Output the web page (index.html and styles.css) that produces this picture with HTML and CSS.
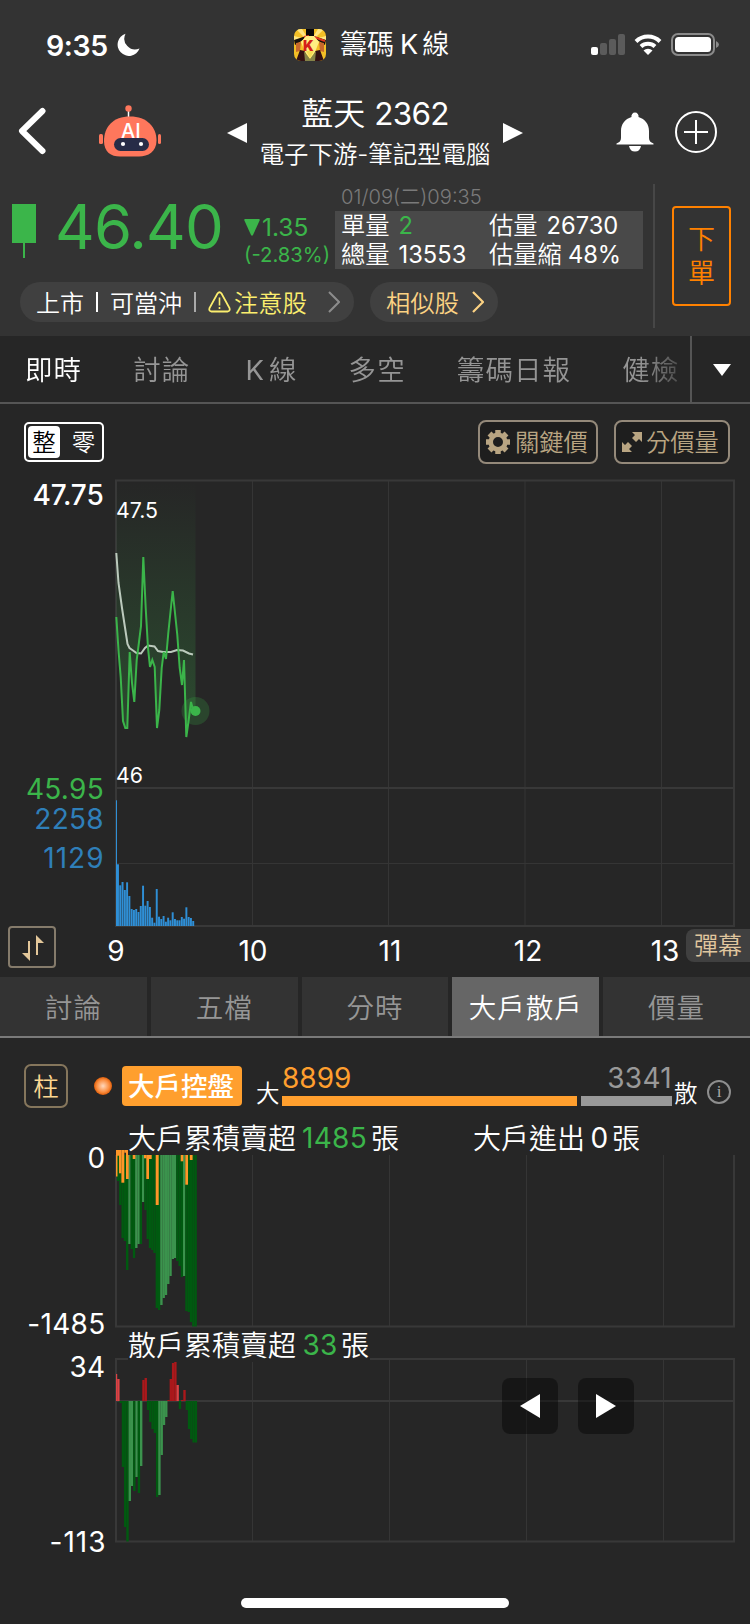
FILE: index.html
```html
<!DOCTYPE html>
<html lang="zh-Hant">
<head>
    <meta charset="UTF-8">
    <meta name="viewport" content="width=device-width, initial-scale=1.0">
    <title>籌碼K線</title>
    <link rel="stylesheet" href="styles.css">
</head>
<body>

    <!-- Status bar -->
    <div class="status">
        <div class="clock">
            <span>9:35</span>
            <svg width="24" height="24" viewBox="0 0 24 24"><path d="M9.500 .8A11.300 11.300 0 1 0 23.500 15.500 10.800 10.800 0 0 1 9.500 .8z" fill="#fff"/></svg>
        </div>
        <div class="app-name">
            <svg width="32" height="32" viewBox="0 0 32 32">
                <defs><clipPath id="round"><rect width="32" height="32" rx="7"/></clipPath></defs>
                <g clip-path="url(#round)">
                    <rect width="32" height="32" fill="#f3bf26"/>
                    <path d="M0 7L12 10 2 0h6l5 8V0h6v8l5-8h6L20 10l12-3v5H0z" fill="#ffe680"/>
                    <path d="M12 0h8v7h-8z" fill="#090909"/>
                    <path d="M0 11l9-3 4-1-4 4-8 5zM32 11l-9-3-4-1 4 4 8 5z" fill="#17120d"/>
                    <path d="M10 8l5-1M20 8l11 4" stroke="#e4361d" stroke-width="2"/>
                    <path d="M2 14l5-1-1 9-4 1zM25 13l5 1v9l-4-1z" fill="#c9682c"/>
                    <path d="M2 32l4-11 5 1 3 10zM30 32l-4-11-5 1-3 10z" fill="#331113"/>
                    <path d="M12 7h8l5 6-4 10-5 7-5-7-4-10z" fill="#ffef82"/>
                    <path d="M10 22l6 8 6-8-1 10h-10z" fill="#858348"/>
                    <path d="M12 22h8l-4 7z" fill="#f6dc55"/>
                    <text class="app-k" x="9" y="21.500">K</text>
                </g>
            </svg>
            <span>籌碼<b>K</b>線</span>
        </div>
        <div class="signals">
            <svg width="34" height="22" viewBox="0 0 34 22">
                <rect y="13" width="7" height="8" rx="2" fill="#fff"/>
                <rect x="9" y="9" width="7" height="12" rx="2" fill="#5b5b5b"/>
                <rect x="18" y="5" width="7" height="16" rx="2" fill="#5b5b5b"/>
                <rect x="27" width="7" height="21" rx="2" fill="#5b5b5b"/>
            </svg>
            <svg width="28" height="22" viewBox="0 0 28 22">
                <path d="M2 7.500a17 17 0 0 1 24 0M7 12.500a10.200 10.200 0 0 1 14 0" fill="none" stroke="#fff" stroke-width="4"/>
                <path d="M14 21l-4.500-4.500a6.500 6.500 0 0 1 9 0z" fill="#fff"/>
            </svg>
            <svg width="49" height="24" viewBox="0 0 49 24">
                <rect x="1" y="1" width="42" height="21" rx="6" fill="none" stroke="#8a8a8a" stroke-width="2"/>
                <rect x="4" y="4" width="36" height="15" rx="3.500" fill="#fff"/>
                <path d="M45 8q3 1.500 3 3.500t-3 3.500z" fill="#8a8a8a"/>
            </svg>
        </div>
    </div>

    <!-- Title bar -->
    <div class="header">
        <svg class="back" width="30" height="50" viewBox="0 0 30 50"><path d="M24.500 5L4 25l20.500 20" fill="none" stroke="#fff" stroke-width="6" stroke-linecap="round" stroke-linejoin="round"/></svg>
        <svg class="robot" width="62" height="52" viewBox="0 0 62 52">
            <path d="M29.500 5v8" stroke="#fff" stroke-width="1.500"/>
            <circle cx="29.500" cy="3.500" r="3.200" fill="#ff775c"/>
            <path d="M31 11.500C48 11.500 57.500 22 57.500 35.500 57.500 47 49 51.500 40 51.500H21C12 51.500 5 47 5 36 5 22 14 11.500 31 11.500z" fill="#ff775c"/>
            <rect y="29" width="4" height="10" rx="1.500" fill="#ff775c"/>
            <rect x="59" y="29" width="3" height="10" rx="1.500" fill="#ff775c"/>
            <rect x="15" y="33" width="35" height="13" rx="6.500" fill="#272c47"/>
            <circle cx="24" cy="39" r="2.100" fill="#fff"/>
            <circle cx="42" cy="39" r="2.100" fill="#fff"/>
            <text class="robot-ai" x="22" y="33">AI</text>
        </svg>
        <div class="stock">
            <svg width="20" height="20" viewBox="0 0 20 20"><path d="M0 10L20 0v20z" fill="#fff"/></svg>
            <div class="stock-name">
                <h1>藍天<span>2362</span></h1>
                <p>電子下游-筆記型電腦</p>
            </div>
            <svg width="20" height="20" viewBox="0 0 20 20"><path d="M20 10L0 0v20z" fill="#fff"/></svg>
        </div>
        <svg class="bell" width="38" height="41" viewBox="0 0 38 41">
            <path d="M15.500 6a3.600 3.600 0 1 1 7 0C29 8 33 13 33 20v7q0 4 4.500 5.500v1H.5v-1Q5 31 5 27v-7c0-7 4-12 10.500-14zM13 35h12q-1 5.500-6 5.500t-6-5.500z" fill="#fff"/>
        </svg>
        <svg width="42" height="42" viewBox="0 0 42 42"><circle cx="21" cy="21" r="20" fill="none" stroke="#fff" stroke-width="2"/><path d="M9 21h24M21 9v24" stroke="#fff" stroke-width="2"/></svg>
    </div>

    <!-- Quote -->
    <div class="quote">
        <div class="quote-main">
            <div class="price-row">
                <svg width="24" height="54" viewBox="0 0 24 54"><path d="M0 0h24v39H13v15h-2V39H0z" fill="#3bb54a"/></svg>
                <div class="price">46.40</div>
                <div class="change">
                    <div class="diff"><svg width="16" height="17" viewBox="0 0 16 17"><path d="M1 0h14q1 0 .6 1.500L9 16q-1 1.500-2 0L.4 1.500Q0 0 1 0z" fill="#3bb54a"/></svg>1.35</div>
                    <div class="percent">(-2.83%)</div>
                </div>
                <div class="volume">
                    <div class="date">01/09(二)09:35</div>
                    <div class="volume-box">
                        <div>單量<i class="green">2</i></div><div>估量<i>26730</i></div>
                        <div>總量<i>13553</i></div><div>估量縮<i class="near">48%</i></div>
                    </div>
                </div>
            </div>
            <div class="pills">
                <div class="pill pill-info">
                    <span>上市</span><s class="bar"></s><span>可當沖</span><s class="bar dim"></s>
                    <svg width="23" height="22" viewBox="0 0 23 22"><path d="M9.500 2.500q2-2.500 4 0l8 14.500q1 3-2 3.500h-16q-3-.5-2-3.500z" fill="none" stroke="#fbee6e" stroke-width="1.800"/><path d="M11.500 6.500v8M11.500 16v2" stroke="#fbee6e" stroke-width="1.600"/></svg>
                    <span class="warn">注意股</span>
                    <svg class="arrow" width="12" height="22" viewBox="0 0 12 22"><path d="M1 1l10 10L1 21" fill="none" stroke="#8c8c8c" stroke-width="2"/></svg>
                </div>
                <div class="pill pill-similar">
                    <span>相似股</span>
                    <svg width="12" height="22" viewBox="0 0 12 22"><path d="M1 1l10 10L1 21" fill="none" stroke="#fcd283" stroke-width="2.200"/></svg>
                </div>
            </div>
        </div>
        <div class="order"><button>下<br>單</button></div>
    </div>

    <!-- Page tabs -->
    <div class="tabs">
        <div class="tab-list">
            <a class="active">即時</a><a>討論</a><a><b>K</b>線</a><a>多空</a><a>籌碼日報</a><a>健檢</a>
        </div>
        <div class="more"><svg width="18" height="12" viewBox="0 0 18 12"><path d="M0 0h18L9 12z" fill="#fff"/></svg></div>
    </div>

    <div class="toolbar">
        <div class="switch"><span class="on">整</span><span>零</span></div>
        <button class="tool key-price">
            <svg width="24" height="24" viewBox="0 0 24 24">
                <circle cx="12" cy="12" r="7.300" fill="none" stroke="#b9a582" stroke-width="4.600"/>
                <path d="M12 0v4M12 20v4M0 12h4M20 12h4M3.500 3.500l2.800 2.800M17.700 17.700l2.800 2.800M3.500 20.500l2.800-2.800M17.700 6.300l2.800-2.800" stroke="#b9a582" stroke-width="5.500"/>
            </svg>
            <span>關鍵價</span>
        </button>
        <button class="tool">
            <svg width="20" height="20" viewBox="0 0 20 20"><path d="M10 0h10v10l-3-3-3 3-4-4 3-3zM0 10l3 3 3-3 4 4-3 3 3 3H0z" fill="#b9a582"/></svg>
            <span>分價量</span>
        </button>
    </div>

    <!-- Price and volume chart -->
    <div class="chart-box">
        <svg class="chart" width="750" height="501" viewBox="0 476 750 501">
            <defs>
                <linearGradient id="fade" gradientUnits="userSpaceOnUse" x1="0" y1="481" x2="0" y2="740">
                    <stop offset="0" stop-color="#3bb54a" stop-opacity="0"/>
                    <stop offset="1" stop-color="#3bb54a" stop-opacity=".27"/>
                </linearGradient>
            </defs>
            <path class="grid" d="M252.500 481v445M388.500 481v445M525 481v445M661.500 481v445M116 863.500h618"/>
            <path class="frame" d="M116 926V480.500h618V926zM116 788h618"/>
            <path fill="url(#fade)" d="M116.300 481V617L118.700 653 120.700 677 123 721 125.300 728 127.300 728 129.700 652 132 683 134.300 702 136.700 660 139 642 141 626 143.300 557 145.700 608 148 648 150 667 152.300 660 154.700 667 157 728 159.300 710 161.700 668 163.700 652 166 659 168.300 633 170.700 610 172.700 591 175 613 177.300 635 179.700 668 182 685 184 660 186.300 737 188.700 720 191 702 193.300 711 195.500 711V481z"/>
            <polyline class="average" points="116.300,553 118.500,583 122,608 127.500,644 129.500,648 133,650.500 136.500,653 141,653.500 145,648 148,645.500 154.500,646.500 158,651 163,652 171,652 177,650 183,650.500 189,653.500 193,654.500"/>
            <polyline class="line" points="116.300,617 118.700,653 120.700,677 123,721 125.300,728 127.300,728 129.700,652 132,683 134.300,702 136.700,660 139,642 141,626 143.300,557 145.700,608 148,648 150,667 152.300,660 154.700,667 157,728 159.300,710 161.700,668 163.700,652 166,659 168.300,633 170.700,610 172.700,591 175,613 177.300,635 179.700,668 182,685 184,660 186.300,737 188.700,720 191,702 193.300,711 195.500,711"/>
            <circle cx="195.500" cy="711" r="14" fill="#3bb54a" fill-opacity=".22"/>
            <circle cx="195.500" cy="711" r="5" fill="#3bb54a"/>
            <g id="volumeBars"></g>
            <text class="label strong" x="103.500" y="504.500">47.75</text>
            <text class="label green" x="104" y="798.500">45.95</text>
            <text class="label blue" x="104" y="828.500">2258</text>
            <text class="label blue wide" x="104.500" y="867.500">1129</text>
            <text class="mark" x="116" y="518">47.5</text>
            <text class="mark" x="116" y="783">46</text>
            <text class="hour" x="116" y="961">9</text>
            <text class="hour" x="253" y="961">10</text>
            <text class="hour" x="390" y="961">11</text>
            <text class="hour" x="528" y="961">12</text>
            <text class="hour" x="665" y="961">13</text>
        </svg>
        <div class="sort"><svg width="22" height="26" viewBox="0 0 22 26"><path d="M6 6h2v20L0 18h6zM14 20V0l8 8h-6v12z" fill="#e3c79a"/></svg></div>
        <div class="danmu">彈幕</div>
    </div>

    <div class="sub-tabs">
        <a>討論</a><a>五檔</a><a>分時</a><a class="active">大戶散戶</a><a>價量</a>
    </div>

    <!-- Big / small holders -->
    <div class="holders">
        <div class="bar-mode">柱</div>
        <div class="dot"></div>
        <div class="badge">大戶控盤</div>
        <span class="side">大</span>
        <div class="ratio">
            <div class="ratio-numbers"><span>8899</span><span>3341</span></div>
            <div class="ratio-bar"><div style="width: 295px"></div><div style="width: 91px"></div></div>
        </div>
        <span class="side">散</span>
        <svg class="info" width="24" height="24" viewBox="0 0 24 24"><circle cx="12" cy="12" r="11" fill="none" stroke="#8e8e8e" stroke-width="2"/><text class="info-i" x="12" y="17">i</text></svg>
    </div>

    <div class="chart-box">
        <svg class="chart" width="750" height="450" viewBox="0 1116 750 450">
            <path class="grid" d="M252.500 1155v171M389.500 1155v171M526.500 1155v171M663.500 1155v171"/>
            <path class="frame" d="M116 1155v171.500h618V1155"/>
            <g id="bigBars"></g>
            <path class="grid" d="M252.500 1362v179M389.500 1360v181M526.500 1360v181M663.500 1360v181"/>
            <path class="frame" d="M128 1359h-12v182.500h618V1359H370M116 1401h618"/>
            <g id="smallBars"></g>
            <text class="label" x="105.500" y="1168">0</text>
            <text class="label" x="105.500" y="1333.500">-1485</text>
            <text class="label" x="105.500" y="1377">34</text>
            <text class="label wide" x="106.500" y="1552">-113</text>
            <text class="caption" x="128" y="1149">大戶累積賣超</text>
            <text class="caption number green" x="302" y="1148">1485</text>
            <text class="caption" x="371" y="1149">張</text>
            <text class="caption" x="473" y="1149">大戶進出</text>
            <text class="caption number" x="590.500" y="1148">0</text>
            <text class="caption" x="612" y="1149">張</text>
            <text class="caption" x="128" y="1356">散戶累積賣超</text>
            <text class="caption number green" x="302.500" y="1355">33</text>
            <text class="caption" x="341" y="1356">張</text>
        </svg>
        <div class="stepper">
            <button><svg width="20" height="24" viewBox="0 0 20 24"><path d="M0 12L20 0v24z" fill="#fff"/></svg></button>
            <button><svg width="20" height="24" viewBox="0 0 20 24"><path d="M20 12L0 0v24z" fill="#fff"/></svg></button>
        </div>
    </div>

    <div class="home-bar"></div>

    <script>
        const STEP = 2.28;
        const DARK = "#005a10", LIGHT = "#3b934d", RED = "#aa181b", PINK = "#dd4245", ORANGE = "#ff9628";

        function addBar(group, x, y1, y2, width, color) {
            let bar = document.createElementNS("http://www.w3.org/2000/svg", "rect");
            bar.setAttribute("x", x);
            bar.setAttribute("y", Math.min(y1, y2));
            bar.setAttribute("width", width);
            bar.setAttribute("height", Math.abs(y2 - y1));
            bar.setAttribute("fill", color);
            document.getElementById(group).appendChild(bar);
        }

        // volume per minute
        let volume = [61.7, 40.7, 44, 36, 43.7, 30, 17, 16, 17, 14, 20, 40.3, 20.3, 25, 19, 8.3, 3.3, 37, 9.3, 7, 10, 4.3, 8.3, 5.7, 13.7, 7, 5.7, 5.7, 9, 7.3, 18.7, 9, 8, 5];
        addBar("volumeBars", 116, 926, 800.3, 1, "#2f8fd6");
        volume.forEach((v, i) => addBar("volumeBars", 117 + i * STEP, 926, 926 - v, 1.95, "#2f8fd6"));

        // accumulated position of the big holders, l = lighter (recovering) minute
        let big = "26 50 83 86 115 89l 94 103 93l 89l 89 47l 55 84 93 95 98 153 155 150l 143l 140l 129l 121l 104l 103l 106 111 122 121l 156 157 167 171.500 171.500".split(" ");
        big.forEach((v, i) => addBar("bigBars", 116.9 + i * STEP, 1155, 1155 + parseFloat(v), STEP + .1, v.endsWith("l") ? LIGHT : DARK));
        let single = [[116, 1150, 1176.5, 1.5], [117, 1150, 1155.7, 2], [119, 1150, 1173.3, 2.4], [121.4, 1150, 1182.7, 2.9], [124.3, 1150, 1152.7, 1.7], [126, 1150, 1179, 2],
            [128, 1155, 1179, .7], [132.7, 1155, 1159, 2.7], [144, 1155, 1158.3, 2.5], [146.3, 1155, 1179, 2.7], [149, 1155, 1159, 2.7], [155.7, 1155, 1205, 3],
            [180.7, 1155, 1161.3, 2.6], [185.3, 1155, 1184.7, 2.7], [189.8, 1155, 1160, 2.8]];
        single.forEach(s => addBar("bigBars", s[0], s[1], s[2], s[3], ORANGE));

        // small holders, positive = bought
        let small = "22p -2 -66 -126 -140.500 -100l -85l -90 -76l -92 -65l 21 23 -9 -21 -28 -32 -96 -94l -54l -24l -16l 1 22 38 39 16p -8 1 11 -9 -28 -38 -41.500 -41.500".split(" ");
        addBar("smallBars", 116, 1401, 1374, 1.2, PINK);
        small.forEach((v, i) => {
            let n = parseFloat(v);
            let color = n > 0 ? (v.endsWith("p") ? PINK : RED) : (v.endsWith("l") ? LIGHT : DARK);
            addBar("smallBars", 117.2 + i * STEP, 1401, 1401 - n, STEP + .1, color);
        });
    </script>

</body>
</html>
```
FILE: styles.css
```css
* { box-sizing: border-box; }
body {
    width: 750px;
    height: 1624px;
    margin: 0;
    overflow: hidden;
    font-family: Inter, "Noto Sans CJK TC", sans-serif;
    font-weight: 350;
    color: #fff;
    background: #262626;
}
svg { display: block; flex: none; }
b { font-weight: 400; }
i { font-style: normal; }
h1, p { margin: 0; font-weight: 350; }
button {
    padding: 0;
    font: inherit;
    color: inherit;
    background: none;
    border: 0;
}
.green { color: #3bb54a; fill: #3bb54a; }

/* status bar */
.status {
    display: flex;
    align-items: center;
    height: 90px;
    padding: 0 30px 0 46px;
    background: #333;
}
.clock {
    display: flex;
    align-items: center;
    gap: 8px;
    width: 248px;
    font-size: 28.5px;
    font-weight: 600;
    letter-spacing: -0.4px;
}
.app-name {
    display: flex;
    align-items: center;
    gap: 14px;
    width: 297px;
    font-size: 27px;
    line-height: 40px;
}
.app-name span { margin-top: -1px; }
.app-name b { margin: 0 4px 0 6px; }
.app-k {
    font: 900 14px Inter, sans-serif;
    fill: #d52119;
}
.signals {
    display: flex;
    align-items: center;
    gap: 9px;
}

/* title bar */
.header {
    display: flex;
    align-items: center;
    height: 90px;
    padding: 0 33px 6px 18px;
    background: #333;
}
.back { margin-top: -2px; }
.robot { margin: -2px 0 0 51px; }
.robot-ai {
    font: 500 20px Inter, sans-serif;
    fill: #fff;
}
.stock {
    display: flex;
    align-items: center;
    justify-content: space-between;
    width: 296px;
    margin: 0 93px 0 66px;
}
.stock > svg { margin-top: 2px; }
.stock-name { text-align: center; }
.stock-name h1 {
    font-size: 32px;
    line-height: 40px;
}
.stock-name h1 span {
    margin-left: 9px;
    font-size: 31.5px;
    font-weight: 400;
    letter-spacing: -0.7px;
}
.stock-name p {
    margin: 2px -4px -2px;
    font-size: 24.4px;
    line-height: 36px;
    white-space: nowrap;
}
.bell { margin: -1px 21px 0 0; }
.header > svg:last-child { margin-top: 0; }

/* quote */
.quote {
    display: flex;
    height: 156px;
    background: #333;
}
.quote-main { width: 653px; }
.price-row {
    display: flex;
    height: 102px;
    padding-left: 12px;
}
.price-row > svg { margin-top: 24px; }
.price {
    width: 189px;
    margin-left: 19px;
    font-size: 61.5px;
    font-weight: 400;
    line-height: 94px;
    letter-spacing: -0.8px;
    color: #3bb54a;
}
.change {
    width: 91px;
    padding-top: 33px;
    font-weight: 400;
    color: #3bb54a;
}
.diff {
    display: flex;
    align-items: center;
    gap: 2px;
    font-size: 24.5px;
    line-height: 29px;
}
.percent {
    font-size: 20.3px;
    line-height: 26px;
}
.date {
    padding: 3px 0 0 6px;
    font-size: 20.2px;
    line-height: 27px;
    height: 31px;
    color: #7a7a7a;
}
.volume-box {
    display: grid;
    grid-template-columns: 148px auto;
    width: 308px;
    height: 58px;
    padding-left: 6px;
    font-size: 24.3px;
    line-height: 29px;
    background: #494949;
}
.volume-box i {
    margin-left: 9px;
    font-size: 23.7px;
    font-weight: 400;
}
.volume-box .near { margin-left: 6px; }
.pills {
    display: flex;
    gap: 16px;
    padding-left: 20px;
}
.pill {
    display: flex;
    align-items: center;
    height: 40px;
    border-radius: 20px;
    font-size: 24px;
    background: #404040;
}
.pill span { margin-top: -2px; }
.pill-info {
    width: 334px;
    padding-left: 16px;
}
.bar {
    width: 2px;
    height: 20px;
    margin: 0 12px;
    background: #fff;
}
.bar.dim { background: #aaa; }
.pill .warn { margin-left: 3px; font-size: 24.3px; color: #fbee6e; }
.arrow { margin-left: 21px; }
.pill-similar {
    gap: 13px;
    width: 128px;
    padding-left: 16px;
    font-size: 24.3px;
    color: #fcd283;
}
.order {
    height: 144px;
    margin-top: 4px;
    padding: 22px 0 0 17px;
    border-left: 2px solid #474747;
}
.order button {
    width: 59px;
    height: 100px;
    padding-top: 2px;
    border: 2px solid #ff8100;
    border-radius: 4px;
    font-size: 27px;
    line-height: 34px;
    color: #ff8100;
}

/* page tabs */
.tabs {
    display: flex;
    height: 68px;
    border-bottom: 2px solid #555;
}
.tab-list {
    display: flex;
    gap: 51px;
    width: 690px;
    padding-left: 25px;
    font-size: 27.5px;
    line-height: 68px;
    letter-spacing: 1.1px;
    color: #959595;
    white-space: nowrap;
    -webkit-mask-image: linear-gradient(90deg, #000 640px, transparent 700px);
    mask-image: linear-gradient(90deg, #000 640px, transparent 700px);
}
.tab-list b { margin-right: 4px; margin-left: 4px; }
.tab-list .active { color: #fff; }
.more {
    width: 60px;
    padding: 28px 0 0 21px;
    border-left: 2px solid #555;
}

.toolbar {
    display: flex;
    align-items: center;
    gap: 16px;
    height: 72px;
    padding: 4px 20px 0 24px;
}
.switch {
    display: flex;
    align-items: center;
    width: 80px;
    height: 40px;
    margin-right: auto;
    border: 2px solid #fff;
    border-radius: 5px;
    font-size: 23.5px;
    line-height: 33px;
}
.switch span {
    flex: none;
    width: 42px;
    padding-left: 5px;
    text-align: center;
}
.switch .on {
    width: 32px;
    height: 32px;
    margin-left: 2px;
    padding: 0;
    border-radius: 4px;
    color: #000;
    background: #fff;
}
.tool {
    display: flex;
    align-items: center;
    gap: 4px;
    width: 116px;
    height: 44px;
    padding-left: 6px;
    border: 2px solid #94897a;
    border-radius: 8px;
    font-size: 24.3px;
    line-height: 36px;
    white-space: nowrap;
    color: #b9a582;
    background: #1e1e1e;
}
.tool span { margin-top: -1px; }
.key-price { gap: 5px; width: 120px; }

/* charts */
.chart-box { position: relative; }
.grid { fill: none; stroke: #353535; }
.frame { fill: none; stroke: #383838; stroke-width: 2; }
.average { fill: none; stroke: #bccabd; stroke-width: 2; }
.line { fill: none; stroke: #3bb54a; stroke-width: 2; }
.label {
    font-size: 28px;
    font-weight: 400;
    letter-spacing: 0.3px;
    text-anchor: end;
    fill: #fff;
}
.label.strong { font-weight: 500; letter-spacing: -0.2px; }
.label.wide { letter-spacing: 1px; }
.label.green, .caption.green { fill: #3bb54a; }
.label.blue { fill: #2f7fb9; }
.mark { font-size: 21.3px; font-weight: 400; fill: #fff; }
.hour {
    font-size: 28px;
    font-weight: 400;
    text-anchor: middle;
    fill: #fff;
}
.caption { font-size: 28px; fill: #fff; }
.caption.number { font-weight: 400; letter-spacing: 0.3px; }
.sort {
    position: absolute;
    left: 8px;
    top: 450px;
    width: 48px;
    height: 42px;
    padding: 7px 0 0 12px;
    border: 2px solid #857b6b;
    border-radius: 4px;
}
.danmu {
    position: absolute;
    right: 0;
    top: 453px;
    width: 64px;
    height: 33px;
    padding-left: 8px;
    border-radius: 8px 0 0 8px;
    font-size: 24px;
    line-height: 34px;
    color: #e0c79f;
    background: #404040;
}

.sub-tabs {
    display: flex;
    gap: 4px;
    height: 61px;
    border-bottom: 2px solid #7a7a7a;
}
.sub-tabs a {
    flex: 1;
    font-size: 27.5px;
    line-height: 62px;
    letter-spacing: 1px;
    text-align: center;
    color: #969696;
    background: #333;
}
.sub-tabs .active { color: #fff; background: #666; }

/* holders row */
.holders {
    display: flex;
    height: 78px;
    padding: 26px 0 0 24px;
}
.bar-mode {
    width: 44px;
    height: 44px;
    border: 2px solid #85765c;
    border-radius: 7px;
    font-size: 25.5px;
    line-height: 42px;
    text-align: center;
    color: #fcd792;
}
.dot {
    width: 18px;
    height: 18px;
    margin: 13px 10px 0 26px;
    border-radius: 50%;
    background: radial-gradient(#ffd8bd, #fa8b3c 50%, #d95500 75%);
}
.badge {
    width: 120px;
    height: 40px;
    margin: 2px 14px 0 0;
    padding-left: 6px;
    border-radius: 4px;
    font-size: 26.5px;
    font-weight: 500;
    line-height: 40px;
    white-space: nowrap;
    background: #ff9f2e;
}
.side {
    width: 26px;
    margin-top: 14px;
    font-size: 23.5px;
    line-height: 32px;
}
.ratio { width: 390px; }
.ratio-numbers {
    display: flex;
    justify-content: space-between;
    height: 32px;
    font-size: 28px;
    font-weight: 400;
    line-height: 28px;
}
.ratio-numbers span:first-child { color: #ff9f2e; }
.ratio-numbers span:last-child { letter-spacing: 0.3px; color: #999; }
.ratio-bar { display: flex; gap: 4px; height: 10px; }
.ratio-bar div:first-child { background: #ff9f2e; }
.ratio-bar div:last-child { background: #999; }
.ratio + .side { margin-left: 2px; }
.info { margin: 16px 0 0 7px; }
.info-i {
    font: 17px "Liberation Serif", serif;
    text-anchor: middle;
    fill: #aaa;
}

.stepper {
    position: absolute;
    left: 502px;
    top: 262px;
    display: flex;
    gap: 20px;
}
.stepper button {
    width: 56px;
    height: 56px;
    padding-left: 18px;
    border-radius: 8px;
    background: rgba(0, 0, 0, 0.4);
}
.home-bar {
    width: 268px;
    height: 10px;
    margin: 32px auto 0;
    border-radius: 5px;
    background: #fff;
}
```
